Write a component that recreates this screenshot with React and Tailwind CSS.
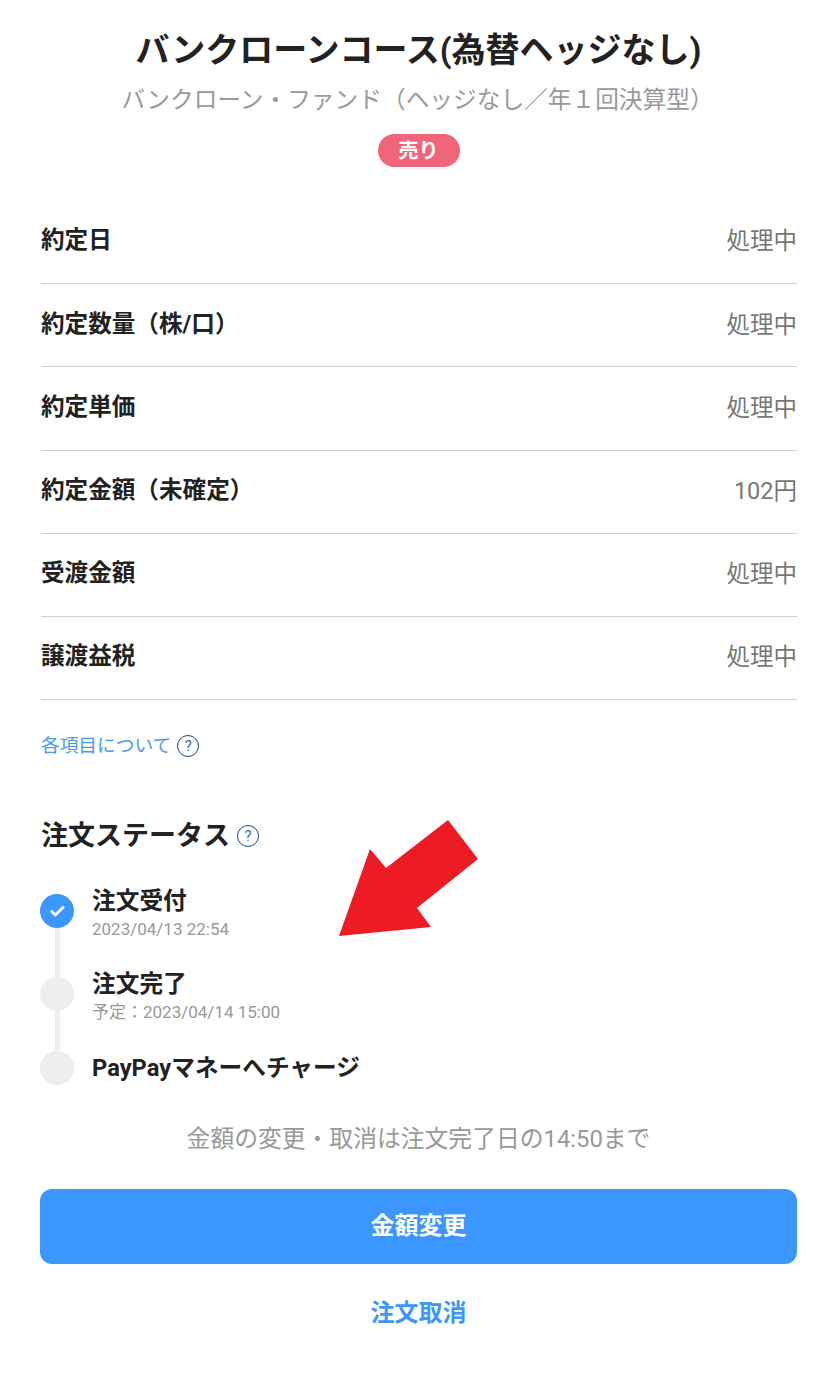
// 注文詳細 screen
import { Check } from 'lucide-react'

const ROWS = [
  { label: '約定日', value: '処理中' },
  { label: '約定数量\uFF08株/口\uFF09', value: '処理中' },
  { label: '約定単価', value: '処理中' },
  { label: '約定金額\uFF08未確定\uFF09', value: '102円' },
  { label: '受渡金額', value: '処理中' },
  { label: '譲渡益税', value: '処理中' },
]

function Help() {
  return (
    <span className="flex h-[22px] w-[22px] items-center justify-center rounded-full border-[1.5px] border-[#1d4a80] text-[15px] text-[#3a6ea5]">
      ?
    </span>
  )
}

export default function App() {
  return (
    <div className="relative h-[1385px] w-[837px] overflow-hidden bg-white font-['Roboto','Noto_Sans_CJK_JP',sans-serif]">
      {/* Header */}
      <div className="flex flex-col items-center pt-[27px]">
        <h1 className="text-[34px] leading-[46px] font-bold text-[#222]">バンクローンコース(為替ヘッジなし)</h1>
        <p className="mt-[4px] pr-[2px] text-[23.7px] leading-[46px] text-[#999]">{'バンクローン・ファンド\uFF08ヘッジなし\uFF0F年\uFF11回決算型\uFF09'}</p>
        <span className="mt-[11px] flex h-[33px] w-[82px] items-center justify-center rounded-full bg-[#f0657a] text-[20px] font-bold text-white">売り</span>
      </div>

      {/* Rows */}
      <div className="mt-[34px] pr-[40px] pl-[41px]">
        {ROWS.map(r => (
          <div key={r.label} className="flex h-[83.2px] items-center justify-between border-b border-[#cfcfcf] pb-[2px]">
            <span className="text-[23.6px] font-bold text-[#222]">{r.label}</span>
            <span className="pt-[2px] text-[23.5px] text-[#777]">{r.value}</span>
          </div>
        ))}
      </div>

      <div className="mt-[32px] flex items-center gap-[6px] px-[41px]">
        <span className="text-[18.7px] leading-[28px] text-[#4a9be8]">各項目について</span>
        <Help />
      </div>

      {/* Status */}
      <div className="mt-[56px] flex items-center gap-[7px] px-[41px]">
        <h2 className="text-[27px] leading-[40px] font-bold text-[#222]">注文ステータス</h2>
        <Help />
      </div>

      <div className="mt-[28px] px-[40px]">
        <div className="flex h-[93px] gap-[18px]">
          <div className="flex w-[34px] flex-col items-center">
            <span className="mt-[10px] flex h-[34px] w-[34px] shrink-0 items-center justify-center rounded-full bg-[#3b96ff]">
              <Check size={17} strokeWidth={4} className="text-white" />
            </span>
            <span className="w-[5px] flex-1 bg-[#eeeeee]" />
          </div>
          <div>
            <p className="text-[23.7px] leading-[34px] font-bold text-[#222]">注文受付</p>
            <p className="mt-[1px] text-[17px] leading-[20px] text-[#999]">2023/04/13 22:54</p>
          </div>
        </div>
        <div className="flex h-[74px] gap-[18px]">
          <div className="flex w-[34px] flex-col items-center">
            <span className="h-[34px] w-[34px] shrink-0 rounded-full bg-[#eeeeee]" />
            <span className="w-[5px] flex-1 bg-[#eeeeee]" />
          </div>
          <div className="-mt-[10px]">
            <p className="text-[23.7px] leading-[34px] font-bold text-[#222]">注文完了</p>
            <p className="mt-[1px] text-[17px] leading-[20px] text-[#999]">{'予定\uFF1A2023/04/14 15:00'}</p>
          </div>
        </div>
        <div className="flex items-center gap-[18px]">
          <span className="h-[34px] w-[34px] shrink-0 rounded-full bg-[#eeeeee]" />
          <p className="text-[23.7px] leading-[34px] font-bold text-[#222]">PayPayマネーへチャージ</p>
        </div>
      </div>

      {/* Actions */}
      <p className="mt-[36px] text-center text-[23.8px] leading-[36px] text-[#999]">金額の変更・取消は注文完了日の14:50まで</p>
      <div className="mt-[32px] px-[40px]">
        <button className="h-[75px] w-full rounded-[12px] bg-[#3b96ff] pb-[2px] text-[24px] font-bold text-white">金額変更</button>
      </div>
      <p className="mt-[31px] text-center text-[24px] leading-[36px] font-bold text-[#3b96ff]">注文取消</p>

      {/* Annotation arrow over the screenshot */}
      <svg className="pointer-events-none absolute top-0 left-0" width="837" height="1385">
        <polygon points="339,936 370,849 386,868 448,820 478,859 417,908 431,927" fill="#ed1c24" />
      </svg>
    </div>
  )
}
